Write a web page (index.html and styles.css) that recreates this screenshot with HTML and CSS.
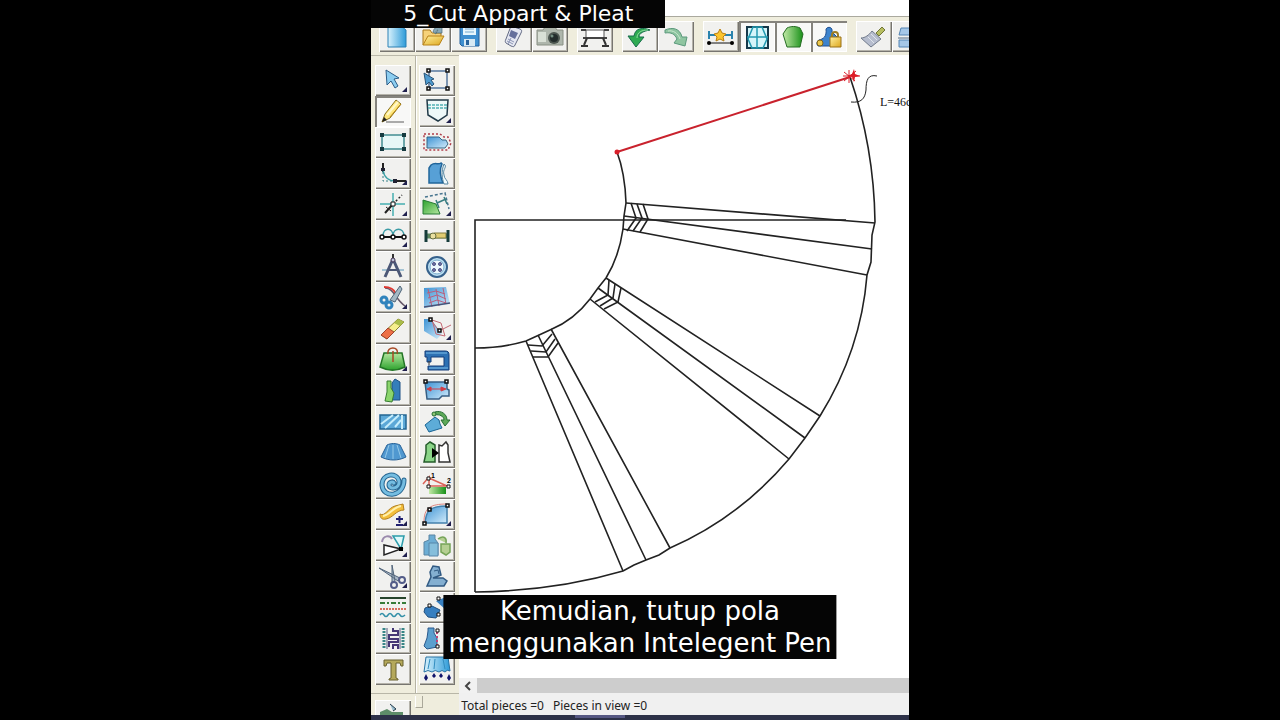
FILE: index.html
```html
<!DOCTYPE html>
<html lang="id">
<head>
<meta charset="utf-8">
<title>5_Cut Appart &amp; Pleat</title>
<link rel="stylesheet" href="styles.css">
</head>
<body>
<svg class="defs" width="0" height="0" aria-hidden="true">
  <defs>
    <linearGradient id="blue" x1="0" y1="0" x2="1" y2="1"><stop offset="0" stop-color="#3d93d4"/><stop offset="1" stop-color="#d3ecfb"/></linearGradient>
    <linearGradient id="sky" x1="0" y1="0" x2="1" y2="0"><stop offset="0" stop-color="#d8f2fd"/><stop offset="1" stop-color="#2e9bd8"/></linearGradient>
    <linearGradient id="green" x1="0" y1="0" x2="1" y2="1"><stop offset="0" stop-color="#2ea32e"/><stop offset="1" stop-color="#b4e6a0"/></linearGradient>
    <linearGradient id="mint" x1="0" y1="1" x2="0" y2="0"><stop offset="0" stop-color="#2ea32e"/><stop offset="1" stop-color="#b4e6a0"/></linearGradient>
    <linearGradient id="leaf" x1="0" y1="0" x2="1" y2="0"><stop offset="0" stop-color="#c3eaa8"/><stop offset="1" stop-color="#189018"/></linearGradient>
    <linearGradient id="gold" x1="0" y1="0" x2="1" y2="1"><stop offset="0" stop-color="#fff0a0"/><stop offset="1" stop-color="#dda61c"/></linearGradient>
  </defs>
</svg>
<div class="app">
  <header class="top">
    <nav class="toolbar" aria-label="Toolbar">
      <div class="group">
        <button class="tool" aria-label="New"><svg viewBox="0 0 36 31"><path d="M9 4h12l6 5v17H9z" fill="url(#sky)" stroke="#2b80b4"/></svg></button>
        <button class="tool" aria-label="Open"><svg viewBox="0 0 36 31"><path d="M8 24V9h7l2 3h9v4" fill="#f6d27a" stroke="#a9781c"/><path d="M8 24l5-9h16l-5 9z" fill="url(#gold)" stroke="#b98217"/><path d="M18 11c1-5 5-6 7-4l2-2v7h-6l2-3c-2 0-2 2-2 4z" fill="#8aaab8" stroke="#496b78" stroke-width=".7"/></svg></button>
        <button class="tool" aria-label="Save"><svg viewBox="0 0 36 31"><path d="M9 5h19v20H11l-2-2z" fill="#3e8fd0" stroke="#235f9c"/><path d="M12 5h13v9H12z" fill="#e7f6fd"/><path d="M14 8h9M14 11h9" stroke="#77a9cf"/><path d="M13 18h11v7H13z" fill="#d7e9f4"/><path d="M15 19h3v5h-3z" fill="#28629c"/></svg></button>
      </div>
      <div class="group">
        <button class="tool" aria-label="Digitizer"><svg viewBox="0 0 36 31"><path d="M15 5l9 3c2 1 2 2 1 4l-6 12c-1 2-1 2-4 1l-5-3c-1-1-1-2 0-4z" fill="#e5e8f2" stroke="#626983"/><path d="M15 9l7 3-3 6-6-3z" fill="#66709c"/><path d="M12 18l6 3M11 20l6 3M15 17l-3 6" stroke="#8c95b5"/></svg></button>
        <button class="tool" aria-label="Camera"><svg viewBox="0 0 36 31"><path d="M5 9h6l2-3h10l2 3h6v15H5z" fill="#aeb6ac" stroke="#899084"/><path d="M6 11h8v10H6z" fill="#d9e0d6"/><circle cx="22" cy="17" r="6" fill="#4b554f"/><circle cx="22" cy="17" r="4" fill="#222c2b"/><circle cx="20" cy="15" r="1.500" fill="#728d80"/></svg></button>
      </div>
      <div class="group">
        <button class="tool" aria-label="Plotter"><svg viewBox="0 0 36 31"><path d="M9 9h18v8H9z" fill="#fff" stroke="#555"/><path d="M4 9h5M27 9h5M6 17h24" stroke="#444" stroke-width="2"/><path d="M10 17L7 24M26 17l3 7M4 25h7M25 25h7" stroke="#333" stroke-width="2"/></svg></button>
      </div>
      <div class="group">
        <button class="tool" aria-label="Undo"><svg viewBox="0 0 36 31"><path d="M28 9C21 6 13 7 12 15H6l8 11 8-10h-5c0-4 5-6 11-7z" fill="#2faa52" stroke="#176d4c"/><path d="M26 9c-6 0-11 2-11 8" stroke="#8ddb9e" fill="none"/></svg></button>
        <button class="tool" aria-label="Redo"><svg viewBox="0 0 36 31"><path d="M7 9c7-3 15-2 17 7h5l-2 9-11-3 3-4c-2-5-6-7-12-6z" fill="#8fc5a1" stroke="#5b997c"/><path d="M10 10c5-1 10 2 12 8" stroke="#c9e9ce" fill="none"/></svg></button>
      </div>
      <div class="group">
        <button class="tool" aria-label="Measure points"><svg viewBox="0 0 36 31"><path d="M6 10v8M29 10v8M6 14h24" stroke="#2a83ae" stroke-width="2"/><path d="M17 8l2 4 4 1-3 3 1 4-4-2-4 2 1-4-3-3 4-1z" fill="#fcc52f" stroke="#b87e12"/><path d="M6 22h23" stroke="#111"/><circle cx="6" cy="22" r="2"/><circle cx="29" cy="22" r="2"/></svg></button>
        <button class="tool pressed" aria-label="Grid"><svg viewBox="0 0 36 31"><path d="M8 6h21v21H8z" fill="#d4f5fa" stroke="#15384a" stroke-width="2"/><path d="M14 6L9 18l4 9h11l4-9-5-12zM8 16h21M18 6v21" fill="none" stroke="#2299b0" stroke-width="1.500"/></svg></button>
        <button class="tool pressed" aria-label="Fill piece"><svg viewBox="0 0 36 31"><path d="M12 7c4-2 9-2 13 0l3 6-3 13H12L8 13z" fill="url(#leaf)" stroke="#246c22"/></svg></button>
        <button class="tool pressed" aria-label="Lock piece"><svg viewBox="0 0 36 31"><path d="M15 8c2-3 7-2 6 3l5 5v9H7c-2-2-1-5 1-6 4-1 8-3 7-11z" fill="#3c83cd" stroke="#1e4f91"/><circle cx="9" cy="22" r="3" fill="#eac74c" stroke="#826316"/><path d="M21 16v-2c0-4 6-4 6 0v2" fill="none" stroke="#9e7d22" stroke-width="2"/><path d="M19 16h11v10H19z" fill="url(#gold)" stroke="#987019"/></svg></button>
      </div>
      <div class="group">
        <button class="tool" aria-label="Brush"><svg viewBox="0 0 36 31"><path d="M20 12l6-6 3 3-6 6z" fill="#b6bd60" stroke="#707537"/><path d="M16 10l9 8-10 8L5 17c4 0 8-3 11-7z" fill="#b6bdce" stroke="#717b8b"/><path d="M15 13l6 6M12 16l6 6" stroke="#dfe5eb"/></svg></button>
        <button class="tool" aria-label="Layers"><svg viewBox="0 0 36 31"><path d="M9 7h14v7H7zM7 19h14v7H7z" fill="#a5c7e7" stroke="#5485b4"/><path d="M6 17h18" stroke="#526b83"/></svg></button>
      </div>
    </nav>
  </header>

  <main class="work">
    <aside class="side">
      <div class="columns">
        <div class="column">
          <button class="tool more" aria-label="Select"><svg viewBox="0 0 36 31"><path d="M11 5l13 8-5 1 4 7-3 2-4-7-4 4z" fill="#8ccdf0" stroke="#2c5d88"/></svg></button>
          <button class="tool pressed" aria-label="Intelligent pen"><svg viewBox="0 0 36 31"><path d="M11 26h18" stroke="#aaa" stroke-width="2"/><path d="M7 26l3-8L21 4l5 4-11 14z" fill="#ffe77c" stroke="#88701d"/><path d="M12 19L23 6" stroke="#fff8c9" stroke-width="2"/><path d="M7 26l2-5 3 3z" fill="#222"/><path d="M15 21L26 8" stroke="#b98a18"/></svg></button>
          <button class="tool" aria-label="Rectangle"><svg viewBox="0 0 36 31"><path d="M7 8h22v14H7z" fill="#e7f7f7" stroke="#438d93" stroke-width="1.500"/><path d="M5 6h4v4H5zM27 6h4v4h-4zM5 20h4v4H5zM27 20h4v4h-4z" fill="#163a40"/></svg></button>
          <button class="tool more" aria-label="Corner"><svg viewBox="0 0 36 31"><path d="M8 5v9M21 23h10" stroke="#222" stroke-width="2"/><path d="M8 12c1 7 5 11 13 11" fill="none" stroke="#3fa3a8" stroke-width="1.500"/><path d="M8 14v9h12" fill="none" stroke="#368087" stroke-dasharray="2"/><path d="M6 10h4v3H6zM18 21h4v4h-4z" fill="#223"/></svg></button>
          <button class="tool more" aria-label="Intersect"><svg viewBox="0 0 36 31"><path d="M5 15h25M18 4v23" stroke="#70bfc0" stroke-width="2"/><path d="M10 24l8-9" stroke="#222" stroke-width="2"/><path d="M18 15l9-9" stroke="#222" stroke-width="1.500" stroke-dasharray="2"/><path d="M16 13h4v4h-4z" fill="#fff" stroke="#111"/><path d="M11 18l5 4" stroke="#222"/></svg></button>
          <button class="tool more" aria-label="Divide"><svg viewBox="0 0 36 31"><path d="M8 16c0-9 10-9 10 0 0-9 11-9 11 0" fill="none" stroke="#3c9ca5" stroke-width="1.500"/><path d="M7 17h22" stroke="#111" stroke-width="2"/><g fill="#fff" stroke="#111" stroke-width="1.500"><circle cx="7" cy="17" r="2"/><circle cx="18" cy="17" r="2"/><circle cx="29" cy="17" r="2"/></g></svg></button>
          <button class="tool" aria-label="Compass"><svg viewBox="0 0 36 31"><path d="M7 19h22" stroke="#5794b7"/><path d="M18 8L10 26M18 8l8 18" stroke="#4c5877" stroke-width="3"/><path d="M12 19h12" stroke="#4c5877" stroke-width="2"/><circle cx="18" cy="9" r="2" fill="#bec6d9" stroke="#435"/><path d="M18 3v4" stroke="#333" stroke-width="2"/></svg></button>
          <button class="tool more" aria-label="Cut curve"><svg viewBox="0 0 36 31"><path d="M10 6c9 0 10 11 20 18" fill="none" stroke="#66586a" stroke-width="1.500"/><path d="M9 5c7 0 10 2 12 7" fill="none" stroke="#e03830" stroke-width="2"/><path d="M25 4l2 3-7 13-5-2z" fill="#a4b8c4" stroke="#4e6579"/><g fill="none" stroke="#3083bc" stroke-width="3"><circle cx="9" cy="18" r="3"/><circle cx="14" cy="23" r="3"/></g></svg></button>
          <button class="tool" aria-label="Eraser"><svg viewBox="0 0 36 31"><path d="M6 22L23 6l6 3-17 17z" fill="#f5ef8e" stroke="#888135"/><path d="M6 22l7-7 6 4-7 7z" fill="#ed7046" stroke="#a0412c"/><path d="M19 10l6 3 4-4-6-3z" fill="#a9bd4a"/></svg></button>
          <button class="tool more" aria-label="Skirt"><svg viewBox="0 0 36 31"><path d="M9 9h18l3 14c-8 4-17 4-25 0z" fill="url(#mint)" stroke="#237626" stroke-width="1.500"/><path d="M18 7v11M13 10c-2-8 12-8 9 0" fill="none" stroke="#a74824" stroke-width="1.500"/></svg></button>
          <button class="tool" aria-label="Match pieces"><svg viewBox="0 0 36 31"><path d="M17 8l3-4 5 3v18h-8z" fill="#347eba" stroke="#1d5186"/><path d="M12 6h4v7l3 5-2 9-7-1 2-9z" fill="#8bd56c" stroke="#387e31"/></svg></button>
          <button class="tool" aria-label="Fold"><svg viewBox="0 0 36 31"><path d="M5 9h26v14H5z" fill="#5ca8d7" stroke="#236593" stroke-width="1.500"/><path d="M6 18L18 9M10 22L24 9M20 21l6-7M27 9v14" fill="none" stroke="#c6edfb" stroke-width="2"/></svg></button>
          <button class="tool" aria-label="Flare"><svg viewBox="0 0 36 31"><path d="M12 8c4-2 9-2 13 0l6 12c-8 4-17 4-25 0z" fill="#5098d0" stroke="#296398"/><path d="M14 8l-4 13M18 8v14M22 8l4 13" stroke="#95c9e8"/></svg></button>
          <button class="tool" aria-label="Spiral"><svg viewBox="0 0 36 31"><g fill="none" stroke-linecap="round"><path d="M29 12C29 29 8 31 7 17 7 5 22 4 24 13 25 21 14 22 14 17 14 14 18 13 19 15" stroke="#286792" stroke-width="5"/><path d="M29 12C29 29 8 31 7 17 7 5 22 4 24 13 25 21 14 22 14 17 14 14 18 13 19 15" stroke="#75bde1" stroke-width="3"/></g></svg></button>
          <button class="tool more" aria-label="Adjust length"><svg viewBox="0 0 36 31"><path d="M5 15c5 3 8-6 15-8l8-2 1 6c-8 0-11 8-18 9-4 1-6-1-6-5z" fill="#f3be3b" stroke="#b17e1f"/><path d="M8 17c7-1 10-9 18-10" fill="none" stroke="#fff0ac" stroke-width="2"/><path d="M21 20h7M24.500 17v7M21 26h7" stroke="#202070" stroke-width="2"/></svg></button>
          <button class="tool more" aria-label="Mirror"><svg viewBox="0 0 36 31"><path d="M18 6h11l-3 13z" fill="#dff9fb" stroke="#2d9cab" stroke-width="1.500"/><path d="M9 15v10l17-6z" fill="#fff" stroke="#222" stroke-width="1.500"/><path d="M7 12C8 5 15 5 17 9" fill="none" stroke="#9b8aad" stroke-width="2"/><path d="M24 17h4v4h-4z"/></svg></button>
          <button class="tool more" aria-label="Scissors"><svg viewBox="0 0 36 31"><path d="M4 7l21 10-2 3zM17 4l3 16-3 1z" fill="#aab8c7" stroke="#51647a"/><g fill="none" stroke="#535c89" stroke-width="2"><circle cx="19" cy="24" r="3"/><circle cx="27" cy="19" r="3"/></g></svg></button>
          <button class="tool" aria-label="Line style"><svg viewBox="0 0 36 31"><path d="M5 6h26" stroke="#26442b" stroke-width="2"/><path d="M5 11h26" stroke="#387c39" stroke-width="2" stroke-dasharray="5 2 2 2"/><path d="M5 17h26" stroke="#d66e5d" stroke-width="2" stroke-dasharray="2 1"/><path d="M5 23q2-3 4 0t4 0 4 0 4 0 4 0 5 0" fill="none" stroke="#328fa7" stroke-width="1.500"/></svg></button>
          <button class="tool" aria-label="Stitching"><svg viewBox="0 0 36 31"><path d="M9 5v21M28 5v21" stroke="#398587" stroke-width="3" stroke-dasharray="2 1"/><path d="M12 5v21M25 5v21" stroke="#555b80"/><path d="M14 24v-5h9v-3h-9v-4h9V8h-5V5M18 26v-4h5v4" fill="none" stroke="#453775" stroke-width="2"/></svg></button>
          <button class="tool" aria-label="Text"><svg viewBox="0 0 36 31"><path d="M9 6h19v6h-2l-1-3h-4v15l2 1v1h-9v-1l2-1V9h-4l-1 3H9z" fill="#b5a95b" stroke="#69612e"/></svg></button>
        </div>
        <div class="column">
          <button class="tool" aria-label="Select piece"><svg viewBox="0 0 36 31"><path d="M10 6h18v17H10z" fill="none" stroke="#55779e" stroke-width="1.500"/><path d="M5 8l10 6-3 1 3 4-2 2-3-4-3 3z" fill="#4f9bd0" stroke="#295478"/><g fill="#fff" stroke="#111" stroke-width="1.500"><path d="M8 4h3v3H8zM27 4h3v3h-3zM8 22h3v3H8zM27 22h3v3h-3z"/></g></svg></button>
          <button class="tool more" aria-label="Pocket"><svg viewBox="0 0 36 31"><path d="M8 4h21l-1 15-9 6-10-6z" fill="#eef8f8" stroke="#233b49" stroke-width="1.500"/><path d="M9 9h19M9 12h19" stroke="#52b0b4" stroke-width="1.500" stroke-dasharray="3 1"/></svg></button>
          <button class="tool" aria-label="Seam allowance"><svg viewBox="0 0 36 31"><path d="M8 10h12l3 3h4l2 4-3 4H8z" fill="url(#blue)" stroke="#356784"/><path d="M5 7h16l4 3h4l3 6-3 7H5z" fill="none" stroke="#ae3c48" stroke-width="1.500" stroke-dasharray="2"/></svg></button>
          <button class="tool" aria-label="Piece outline"><svg viewBox="0 0 36 31"><path d="M12 7c4-3 7 0 10-2l1 1c-3 6-2 12 1 19H10V10z" fill="#57a0d6" stroke="#21659a" stroke-width="1.500"/><path d="M25 6c4 3-2 5 0 11 0 4 4 5 4 9h-4c-2-6-3-12 0-20z" fill="#f1fcff" stroke="#5786a0"/></svg></button>
          <button class="tool more" aria-label="Rotate piece"><svg viewBox="0 0 36 31"><path d="M4 11l13 4 4 10H4z" fill="url(#green)" stroke="#257b32"/><path d="M6 8l20-4 4 16" fill="none" stroke="#47758f" stroke-width="1.500" stroke-dasharray="3 2"/><path d="M18 14l9-4M25 8l3 7M17 11l3 8" stroke="#377d80" stroke-width="1.500"/></svg></button>
          <button class="tool" aria-label="Notch distance"><svg viewBox="0 0 36 31"><path d="M6 16h23" stroke="#5c8961" stroke-width="5"/><path d="M15 13h12v5H15z" fill="#dfcb71" stroke="#827d3e"/><path d="M7 10v12M29 10v12" stroke="#163c3a" stroke-width="3"/><circle cx="14" cy="16" r="3" fill="#e8dfa0" stroke="#686e42"/></svg></button>
          <button class="tool" aria-label="Button"><svg viewBox="0 0 36 31"><circle cx="18" cy="16" r="10" fill="#bddff2" stroke="#36618c" stroke-width="2"/><circle cx="18" cy="16" r="7" fill="#edf8fc" stroke="#77aacb"/><g fill="#7377a3" stroke="#4d5186"><circle cx="15" cy="13" r="1.500"/><circle cx="21" cy="13" r="1.500"/><circle cx="15" cy="19" r="1.500"/><circle cx="21" cy="19" r="1.500"/></g></svg></button>
          <button class="tool" aria-label="Pleat"><svg viewBox="0 0 36 31"><path d="M5 6l22-1 4 17-26 4z" fill="url(#blue)"/><path d="M9 7l4 18M17 7l3 17M24 6l3 16M8 11l9-2 9 3M9 16l9-3 9 4M10 21l8-3 9 3" fill="none" stroke="#b85f7d"/><path d="M5 25l26-4" fill="none" stroke="#475277" stroke-width="1.500"/></svg></button>
          <button class="tool more" aria-label="Dart"><svg viewBox="0 0 36 31"><path d="M5 6h7l11 15-5 5L5 18z" fill="url(#blue)"/><path d="M12 7l8 11 12-6M13 7l4 14 9 2-4-13z" fill="none" stroke="#c46a74"/><g fill="#fff" stroke="#111" stroke-width="1.500"><path d="M10 5h3v3h-3zM19 16h3v3h-3z"/></g></svg></button>
          <button class="tool" aria-label="Sewing machine"><svg viewBox="0 0 36 31"><path d="M6 7h20c3 0 4 1 4 4v15H9v-4h16v-9H12v5H8v-5H6z" fill="#2d70b3" stroke="#153d78"/><path d="M7 9h21M10 24h19" stroke="#7ebee8"/><path d="M10 17v4" stroke="#333"/></svg></button>
          <button class="tool" aria-label="Grain line"><svg viewBox="0 0 36 31"><path d="M6 7h22v7l2 1v6h-7l-3 3H8z" fill="url(#blue)" stroke="#375e83" stroke-width="1.500"/><path d="M9 14h17M8 14l4-2v4zM27 14l-5-2v4z" fill="#cf3d46" stroke="#cf3d46"/><g fill="#fff" stroke="#111" stroke-width="1.500"><path d="M5 5h3v3H5zM26 5h3v3h-3z"/></g></svg></button>
          <button class="tool" aria-label="Turn piece"><svg viewBox="0 0 36 31"><path d="M6 19l10-8 4 3 1 4 2 4-13 4z" fill="#5dacd8" stroke="#1b6594"/><path d="M16 6c6-2 12 2 12 8h3l-5 6-4-6h3c0-4-5-6-9-5z" fill="#5da958" stroke="#266d33"/><circle cx="15" cy="8" r="2" fill="#8fc773" stroke="#266d33"/></svg></button>
          <button class="tool" aria-label="Mirror piece"><svg viewBox="0 0 36 31"><path d="M5 25l2-9V8l4-3 5 3v17z" fill="#8ad487" stroke="#255c2b" stroke-width="1.500"/><path d="M20 25V8l3 1 4-4 2 3v8l2 9z" fill="#fff" stroke="#333" stroke-width="1.500"/><path d="M13 11v10l7-5z"/></svg></button>
          <button class="tool" aria-label="Shrink"><svg viewBox="0 0 36 31"><path d="M10 19h17v7H10z" fill="url(#leaf)"/><path d="M10 10l18 8M4 16l6-7v9M10 18h17" fill="none" stroke="#db6257" stroke-width="1.500"/><g fill="#fff" stroke="#111"><path d="M8 9h3v3H8zM8 17h3v3H8zM28 17h3v3h-3z"/></g><text class="point" x="12" y="10">1</text><text class="point" x="28" y="15">2</text></svg></button>
          <button class="tool more" aria-label="Move points"><svg viewBox="0 0 36 31"><path d="M6 24c1-10 2-17 22-17v17z" fill="url(#blue)" stroke="#4480ac" stroke-width="1.500"/><path d="M5 23c0-14 6-18 23-18" fill="none" stroke="#de8681"/><g fill="#fff" stroke="#111" stroke-width="1.500"><path d="M4 23h3v3H4zM9 9h3v3H9zM27 5h3v3h-3z"/></g></svg></button>
          <button class="tool" aria-label="Copy pocket"><svg viewBox="0 0 36 31"><path d="M10 5h6v4l3 4v12H5V12l5-2z" fill="#6cadd4" stroke="#5a85a3"/><path d="M10 13h9v13h-9z" fill="#85bedb" stroke="#5685a9"/><path d="M19 9c6-4 9-1 8 4M22 14h9v8l-4 3-5-3z" fill="#b5cf92" stroke="#76a458" stroke-width="1.500"/></svg></button>
          <button class="tool" aria-label="Join pieces"><svg viewBox="0 0 36 31"><path d="M11 11l3-6 6 1 2 8-8 3h10l4 3-3 5H8l4-9z" fill="#84afd1" stroke="#315a83" stroke-width="1.500"/><path d="M15 10l4-1 1 4" fill="none" stroke="#315a83"/></svg></button>
          <button class="tool" aria-label="Rotate pieces"><svg viewBox="0 0 36 31"><path d="M6 16l7-2 8 4-4 8-8-1-4-5z" fill="#377fc0" stroke="#205080"/><path d="M17 9l10-4v13z" fill="#377fc0"/><path d="M9 12h3v3H9zM18 5h3v3h-3zM18 21h3v3h-3z" fill="#fff" stroke="#111"/></svg></button>
          <button class="tool" aria-label="Armhole"><svg viewBox="0 0 36 31"><path d="M9 8V5h6v5l3 5v9l-10 2-3-3 3-8z" fill="#5b9fce" stroke="#2a598c"/><path d="M18 9v14" stroke="#c14378" stroke-width="2" stroke-dasharray="2"/><path d="M17 6h3v3h-3zM17 22h3v3h-3z" fill="#fff" stroke="#111"/></svg></button>
          <button class="tool" aria-label="Gather"><svg viewBox="0 0 36 31"><path d="M7 3h22l2 14q-3-2-5 1-3-3-6 0-4-3-7 0-4-3-8 0z" fill="url(#sky)" stroke="#2872a3"/><path d="M11 5l-2 10M16 5l-1 10M24 5l2 10" stroke="#328dc0"/><g fill="#11146b"><path d="M7 20l2 4-2 3-2-3zM15 19l2 3-2 2-2-2zM22 19l2 3-2 2-2-2zM30 20l2 4-2 3-2-3z"/></g></svg></button>
        </div>
      </div>
      <div class="side-foot">
        <button class="tool" aria-label="More tools"><svg viewBox="0 0 36 31"><path d="M5 12l7-3 5 3h11v3H5z" fill="#5e8d69"/><path d="M15 4l6 5-3 2" fill="#9abdce" stroke="#253a49"/></svg></button>
        <span class="grip"></span>
      </div>
    </aside>

    <section class="view">
      <svg class="canvas" viewBox="459 55 450 623" preserveAspectRatio="xMinYMin slice" role="img" aria-label="Pattern">
        <g class="ink">
          <path d="M846 220H475V592"/>
          <path d="M475 348Q502 348 526 341L538 335.500 551 329.500Q574 320 590 299L598 288 606 278Q619 257 623 229L624 216 626 203Q625 173 617 152"/>
          <path d="M475 592Q555 591 623 571L634 565 646 560 659 555 670 548Q739 518 789 459L805 438 820 416Q861 350 867 275L871 262 872 235 875 222Q874 147 850 77"/>
          <path d="M526 341L623 571M538 335L646 560M551 329L670 548"/>
          <path d="M590 299L789 459M598 288L805 438M606 278L820 416"/>
          <path d="M623 229L867 275M624 216L872 249M626 203L875 223"/>
          <path d="M631 203L636 218 627 231M637 204L642 218 633 231M643 204L648 219 640 232"/>
          <path d="M609 280L608 295 595 302M615 284L613 298 600 306M621 288L618 302 604 309"/>
          <path d="M552 334L542 346 528 345M555 339L546 352 531 351M558 343L548 357 533 357"/>
        </g>
        <path class="active" d="M617 152L850 77"/>
        <circle cx="617" cy="152" r="2.500" fill="#d81f2a"/>
        <path class="star" d="M843 76H860M849 70V83M844 72L855 81M844 81L856 71"/>
        <path d="M854 69l1 5 5 2-5 1-1 5-2-5-5-1 5-2z" fill="#dd1d27"/>
        <path class="cursor" d="M851 102C861 103 865 99 866 90 866 80 868 74 877 76"/>
        <text class="length" x="880" y="106">L=46c</text>
      </svg>
      <div class="scroll"><button class="scroll-left" aria-label="Scroll left"><svg viewBox="0 0 18 15"><path d="M11 4L7 8l4 4" fill="none" stroke="#444" stroke-width="2"/></svg></button></div>
      <div class="status"><span>Total pieces =0</span><span>Pieces in view =0</span></div>
    </section>
  </main>
  <div class="taskbar"><span></span></div>
  <h1 class="title">5_Cut Appart &amp; Pleat</h1>
  <p class="subtitle"><span>Kemudian, tutup pola</span><span>menggunakan Intelegent Pen</span></p>
</div>
</body>
</html>
```
FILE: styles.css
```css
* { box-sizing: border-box; }
body { margin: 0; background: #000; font-family: "Noto Sans", sans-serif; }
.defs { position: absolute; }
.app { position: relative; display: flex; flex-direction: column; width: 42%; min-height: 100vh; margin: 0 auto; overflow: hidden; background: #fff; }
.top { padding-top: 16px; background: #fff; }
.toolbar { display: flex; gap: 9px; overflow: hidden; padding: 4px 0 3px 8px; background: #efeddd; border-top: 1px solid #aaa99e; }
.group { display: flex; flex: none; }
.tool { position: relative; display: block; flex: none; width: 36px; height: 31px; margin: 0; padding: 0; overflow: hidden; border: 0; background: #f1f1ef; box-shadow: inset 1px 1px #fff, inset -1px -1px #777570, inset -2px -2px #b5b3aa; }
.tool svg { display: block; width: 100%; height: 100%; }
.tool.pressed { background: #f8f8f7; box-shadow: inset 2px 2px #85837d, inset -1px -1px #fff; }
.tool.more::after { content: ""; position: absolute; right: 4px; bottom: 4px; border-left: 5px solid transparent; border-bottom: 5px solid #20204e; }
.point { font: bold 7px "Liberation Sans", sans-serif; }

.work { display: grid; grid-template-columns: 88px minmax(0, 1fr); flex: 1; }
.side { display: flex; flex-direction: column; background: #efeddd; border-top: 1px solid #bbb9aa; }
.columns { display: flex; flex: 1; gap: 8px; padding: 0 4px 7px; }
.column { padding-top: 9px; }
.column + .column { position: relative; }
.column + .column::before { content: ""; position: absolute; top: 0; bottom: -7px; left: -4px; border-left: 1px solid #b6b4a4; border-right: 1px solid #fff; }
.side-foot { display: flex; gap: 4px; height: 22px; padding: 6px 4px 0; overflow: hidden; border-top: 1px solid #b8b6a7; }
.grip { width: 8px; height: 12px; margin-top: -4px; border: 1px solid #aaa89a; border-top: 0; border-left-color: #fff; }

.view { display: flex; flex-direction: column; min-width: 0; background: #fff; }
.canvas { display: block; flex: 1 1 0; width: 100%; min-height: 0; }
.ink { fill: none; stroke: #222; stroke-width: 1.6px; }
.active { stroke: #c9222d; stroke-width: 2px; }
.star { stroke: #dc202b; stroke-width: 1px; }
.cursor { fill: none; stroke: #222; stroke-width: 1px; }
.length { font: 12px "Liberation Serif", serif; fill: #111; }
.scroll { height: 15px; background: #cdcdcd; }
.scroll-left { display: block; width: 18px; height: 15px; padding: 0; border: 0; background: #f1f1f1; }
.scroll-left svg { display: block; }
.status { display: flex; gap: 9px; height: 22px; padding: 2px 2px 0; overflow: hidden; background: #f0f0f0; color: #222; font-size: 12px; line-height: 22px; white-space: nowrap; }
.taskbar { height: 5px; padding-left: 38%; background: #2d3148; }
.taskbar span { display: block; width: 50px; height: 3px; background: #565883; }

.title, .subtitle { position: absolute; margin: 0; background: #050505; color: #fff; font-family: "DejaVu Sans", Verdana, sans-serif; font-weight: 400; text-align: center; white-space: nowrap; }
.title { top: 0; left: 0; padding: 0 32px; font-size: 22px; line-height: 28px; }
.subtitle { bottom: 61px; left: 50%; padding: 0 5px; transform: translateX(-50%); font-size: 26px; line-height: 32px; }
.subtitle span { display: block; }
```
